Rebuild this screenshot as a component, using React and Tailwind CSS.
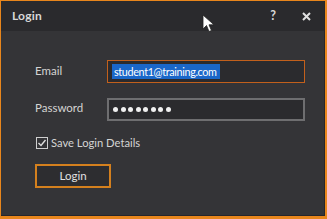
import React from "react";

export default function App() {
  const font = { fontFamily: 'Lato, "Noto Sans", sans-serif' };
  return (
    <div className="relative w-[327px] h-[219px] overflow-hidden bg-[#e8861c]" style={font}>
      <div className="absolute left-[1px] top-[1px] w-[324px] h-[215px] flex flex-col bg-[#343437] border-r border-b border-[#26262a]">
        <div className="h-[30px] bg-[#2a2a2d] flex items-center pl-[11px] pr-[12px] text-[#d8d8d8]">
          <span className="text-[12px] font-bold tracking-[0.2px]">Login</span>
          <span className="ml-auto text-[12.5px] font-bold mr-[26px]">?</span>
          <svg width="9" height="9" viewBox="0 0 9 9" className="mr-[1px]">
            <path d="M1 1 L8 8 M8 1 L1 8" stroke="#e0e0e0" strokeWidth="2" />
          </svg>
        </div>
        <div className="flex flex-col pl-[34px] pt-[29px] text-[#d4d4d4] text-[11px]">
          <div className="flex items-center h-[23px]">
            <span className="w-[72px] -mt-[2px] text-[11.5px]">Email</span>
            <div className="w-[198px] h-[23px] border border-[#c2601c] bg-[#2b2b2e] flex items-center pl-[4px]">
              <span className="bg-[#1a67c9] text-white leading-[15px] pl-[2px] pr-[3px] text-[10.8px] tracking-[-0.35px]">student1@training.com</span>
            </div>
          </div>
          <div className="flex items-center h-[23px] mt-[15px]">
            <span className="w-[72px] -mt-[3px] text-[11.5px]">Password</span>
            <div className="w-[198px] h-[23px] border-2 border-[#6e6e70] bg-[#2b2b2e] flex items-center pl-[4px] gap-[2.5px]">
              {Array.from({ length: 8 }).map((_, i) => (
                <span key={i} className="w-[5px] h-[5px] rounded-full bg-[#f0f0f0]" />
              ))}
            </div>
          </div>
          <div className="flex items-center mt-[14px] ml-[1px]">
            <div className="w-[12px] h-[12px] border border-[#cfcfcf] flex items-center justify-center">
              <svg width="10" height="10" viewBox="0 0 10 10">
                <path d="M1.5 5 L4 7.5 L8.5 2" stroke="#e0e0e0" strokeWidth="1.4" fill="none" />
              </svg>
            </div>
            <span className="ml-[3px] text-[11.2px]">Save Login Details</span>
          </div>
          <div className="mt-[12px] w-[76px] h-[24px] border-2 border-[#d4801e] bg-[#2d2d30] flex items-center justify-center text-[#e0e0e0] text-[11.5px]">
            Login
          </div>
        </div>
      </div>
      <svg className="absolute left-[202px] top-[14px]" width="14" height="19" viewBox="0 0 14 19">
        <path d="M1 1 L1 15 L4.5 11.5 L7 17.5 L9.5 16.5 L7 10.8 L12 10.8 Z" fill="#ffffff" stroke="#222" strokeWidth="0.8" />
      </svg>
    </div>
  );
}
